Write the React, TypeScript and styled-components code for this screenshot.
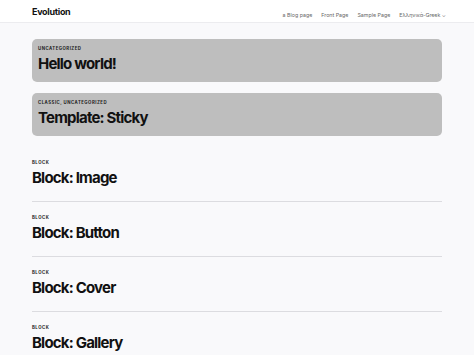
import { FC } from "react";
import styled, { createGlobalStyle } from "styled-components";

const GlobalStyle = createGlobalStyle`
  html, body {
    margin: 0;
    padding: 0;
    background: #f9f9fb;
    font-family: Inter, "Noto Sans", sans-serif;
    color: #111;
  }
  * {
    box-sizing: border-box;
  }
`;

const HeaderStyled = styled.header`
  display: flex;
  align-items: center;
  justify-content: space-between;
  height: 23px;
  padding: 0 28px 0 32px;
  background: #fff;
  border-bottom: 1px solid #ececef;
`;

const SiteTitle = styled.a`
  font-size: 9px;
  font-weight: 700;
  letter-spacing: -0.3px;
  color: #111;
  text-decoration: none;
`;

const NavList = styled.ul`
  display: flex;
  gap: 9px;
  margin: 0;
  padding: 0;
  list-style: none;
`;

const NavLink = styled.a`
  font-size: 5.3px;
  color: #666;
  text-decoration: none;
`;

const MainStyled = styled.main`
  display: grid;
  padding: 16px 32px 0 32px;
`;

const StickyCard = styled.article`
  display: grid;
  gap: 2px;
  padding: 7px 6px 8px 6px;
  margin-bottom: 11px;
  background: #bebebe;
  border-radius: 5px;
`;

const Category = styled.div`
  font-size: 4.3px;
  line-height: 6px;
  font-weight: 700;
  letter-spacing: 0.5px;
  text-transform: uppercase;
  color: #222;
`;

const PostTitle = styled.h2`
  margin: 0;
  font-size: 15px;
  line-height: 20px;
  font-weight: 700;
  letter-spacing: -0.8px;
  color: #111;
`;

const PostList = styled.div`
  display: grid;
`;

const PostItem = styled.article`
  display: grid;
  gap: 2px;
  padding: 13px 0 13px 0;
  border-bottom: 1px solid #dcdce0;
`;

const stickyPosts = [
  { category: "Uncategorized", title: "Hello world!" },
  { category: "Classic, Uncategorized", title: "Template: Sticky" },
];

const posts = ["Image", "Button", "Cover", "Gallery"];

const navItems = ["a Blog page", "Front Page", "Sample Page", "Ελληνικά-Greek ⌄"];

const App: FC = () => {
  return (
    <>
      <GlobalStyle />
      <HeaderStyled>
        <SiteTitle href="#">Evolution</SiteTitle>
        <nav>
          <NavList>
            {navItems.map((item) => (
              <li key={item}>
                <NavLink href="#">{item}</NavLink>
              </li>
            ))}
          </NavList>
        </nav>
      </HeaderStyled>
      <MainStyled>
        {stickyPosts.map((post) => (
          <StickyCard key={post.title}>
            <Category>{post.category}</Category>
            <PostTitle>{post.title}</PostTitle>
          </StickyCard>
        ))}
        <PostList>
          {posts.map((name) => (
            <PostItem key={name}>
              <Category>Block</Category>
              <PostTitle>Block: {name}</PostTitle>
            </PostItem>
          ))}
        </PostList>
      </MainStyled>
    </>
  );
};

export default App;
